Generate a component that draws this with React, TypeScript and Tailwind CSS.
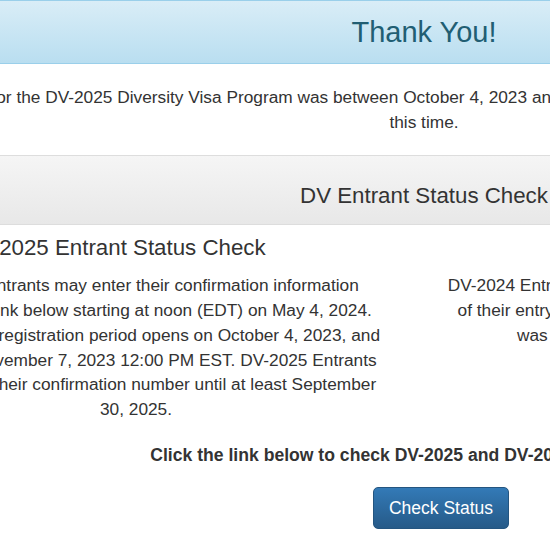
import React from 'react';

const leftLines = [
  'DV-2025 Entrants may enter their confirmation information',
  'through the link below starting at noon (EDT) on May 4, 2024.',
  'The DV-2025 registration period opens on October 4, 2023, and',
  'closes on November 7, 2023 12:00 PM EST. DV-2025 Entrants',
  'should keep their confirmation number until at least September',
  '30, 2025.',
];

const rightLines = [
  'DV-2024 Entrants can continue to check the status and results online',
  'of their entry through the link below until September 30, 2024. This',
  'was first made available on May 16, 2023, at noon.',
];

function Lines({ lines }: { lines: string[] }) {
  return (
    <div className="flex flex-col items-center">
      {lines.map((l) => (
        <p key={l} className="whitespace-nowrap">
          {l}
        </p>
      ))}
    </div>
  );
}

export default function App() {
  return (
    <div className="h-[548px] w-[550px] overflow-hidden bg-white font-['Liberation_Sans',Arial,sans-serif] text-[17.3px] leading-[24.7px] text-[#333]">
      <div className="-ml-[152px] w-[1152px]">
        {/* alert */}
        <div className="flex h-[64px] items-center justify-center border-y border-[#9acfea] bg-linear-to-b from-[#d9edf7] to-[#b9def0]">
          <h1 className="pt-[1px] text-[29px] leading-none text-[#215e73]">Thank You!</h1>
        </div>

        <div className="mt-[21px]">
          <Lines
            lines={[
              'The registration period for the DV-2025 Diversity Visa Program was between October 4, 2023 and November 7, 2023. Online entries are no longer processed at',
              'this time.',
            ]}
          />
        </div>

        {/* panel heading */}
        <div className="mt-[21px] flex h-[70px] items-center justify-center border-y border-[#ddd] bg-linear-to-b from-[#f5f5f5] to-[#e8e8e8] pt-[11px]">
          <h2 className="text-[22.3px] leading-none text-[#333]">DV Entrant Status Check</h2>
        </div>

        <div className="grid grid-cols-2">
          <div>
            <h3 className="mt-[11px] pl-[114px] text-[22.3px] leading-[24px]">DV-2025 Entrant Status Check</h3>
            <div className="mt-[13px]">
              <Lines lines={leftLines} />
            </div>
          </div>
          <div className="pt-[48px]">
            <Lines lines={rightLines} />
          </div>
        </div>

        <p className="mt-[21px] text-center text-[17.6px] font-bold">
          Click the link below to check DV-2025 and DV-2024 Entrant Status
        </p>

        <div className="mt-[20px] flex justify-center pl-[34px]">
          <button className="h-[42px] rounded-[5px] border border-[#245580] bg-linear-to-b from-[#337ab7] to-[#265a88] px-[15px] text-[17.5px] text-white">
            Check Status
          </button>
        </div>
      </div>
    </div>
  );
}
